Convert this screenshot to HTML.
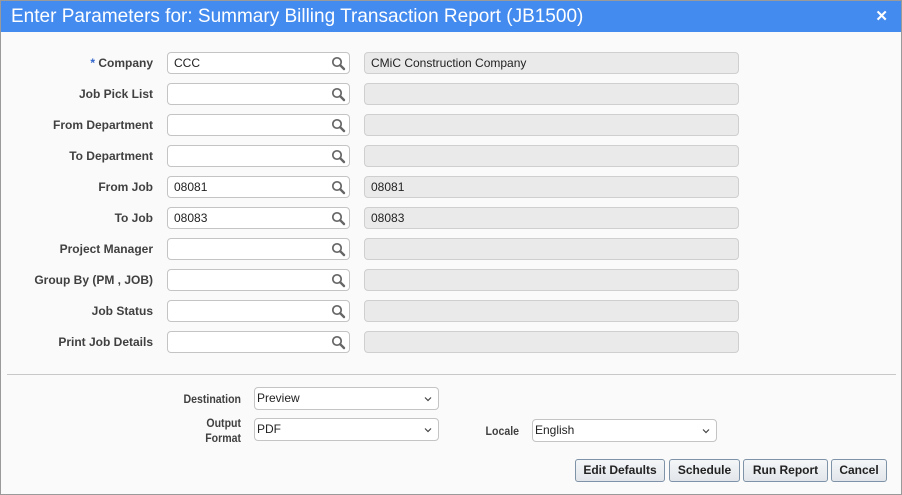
<!DOCTYPE html>
<html><head><meta charset="utf-8"><style>
*{box-sizing:border-box;margin:0;padding:0}
body{width:902px;height:495px;background:#fafafa;font-family:"Liberation Sans",Arial,sans-serif;position:relative;overflow:hidden;border:1px solid #9a9a9a}
.title{position:absolute;left:0;top:0;width:900px;height:31px;background:#448bef;color:#fff;font-size:19px;line-height:31px;padding-left:10px}
.x{position:absolute;right:13px;top:0;color:#fff;font-size:15px;font-weight:bold;line-height:31px}
.lbl{position:absolute;right:748px;font-size:12px;font-weight:bold;color:#404040;text-align:right;line-height:22px}
.inp{position:absolute;left:166px;width:183px;height:22px;background:#fff;border:1px solid #c4c4c4;border-radius:4px;font-size:12px;color:#222;line-height:20px;padding-left:6px}
.inp svg{position:absolute;right:3px;top:3px}
.dsp{position:absolute;left:363px;width:375px;height:22px;background:#eaeaea;border:1px solid #cfcfcf;border-radius:4px;font-size:12px;color:#222;line-height:20px;padding-left:6px}
.sep{position:absolute;left:6px;top:373px;width:889px;height:1px;background:#c8c8c8}
.bl{position:absolute;font-size:12px;font-weight:bold;color:#404040;text-align:right;line-height:15px;transform:scaleX(0.88);transform-origin:right center}
.sel{position:absolute;height:23px;background:#fff;border:1px solid #c4c4c4;border-radius:4px;font-size:12px;color:#222;line-height:21px;padding-left:2px}
.sel svg{position:absolute;right:6px;top:8px}
.btn{position:absolute;top:458px;height:23px;background:linear-gradient(#f4f6f8,#e2e6ea);border:1px solid #7e93a8;border-radius:3px;font-size:12px;font-weight:bold;color:#222;text-align:center;line-height:21px}
</style></head><body>
<div class="title">Enter Parameters for: Summary Billing Transaction Report (JB1500)</div>
<div class="x">✕</div>

<div class="lbl" style="top:51px"><span style="color:#3366cc">*</span> Company</div>
<div class="lbl" style="top:82px">Job Pick List</div>
<div class="lbl" style="top:113px">From Department</div>
<div class="lbl" style="top:144px">To Department</div>
<div class="lbl" style="top:175px">From Job</div>
<div class="lbl" style="top:206px">To Job</div>
<div class="lbl" style="top:237px">Project Manager</div>
<div class="lbl" style="top:268px">Group By (PM , JOB)</div>
<div class="lbl" style="top:299px">Job Status</div>
<div class="lbl" style="top:330px">Print Job Details</div>

<div class="inp" style="top:51px">CCC<svg width="15" height="15" viewBox="0 0 15 15"><circle cx="6" cy="6" r="4.2" fill="none" stroke="#666" stroke-width="1.7"/><path d="M9.2 9.2L13 13" stroke="#666" stroke-width="2.4" stroke-linecap="round"/></svg></div>
<div class="inp" style="top:82px"><svg width="15" height="15" viewBox="0 0 15 15"><circle cx="6" cy="6" r="4.2" fill="none" stroke="#666" stroke-width="1.7"/><path d="M9.2 9.2L13 13" stroke="#666" stroke-width="2.4" stroke-linecap="round"/></svg></div>
<div class="inp" style="top:113px"><svg width="15" height="15" viewBox="0 0 15 15"><circle cx="6" cy="6" r="4.2" fill="none" stroke="#666" stroke-width="1.7"/><path d="M9.2 9.2L13 13" stroke="#666" stroke-width="2.4" stroke-linecap="round"/></svg></div>
<div class="inp" style="top:144px"><svg width="15" height="15" viewBox="0 0 15 15"><circle cx="6" cy="6" r="4.2" fill="none" stroke="#666" stroke-width="1.7"/><path d="M9.2 9.2L13 13" stroke="#666" stroke-width="2.4" stroke-linecap="round"/></svg></div>
<div class="inp" style="top:175px">08081<svg width="15" height="15" viewBox="0 0 15 15"><circle cx="6" cy="6" r="4.2" fill="none" stroke="#666" stroke-width="1.7"/><path d="M9.2 9.2L13 13" stroke="#666" stroke-width="2.4" stroke-linecap="round"/></svg></div>
<div class="inp" style="top:206px">08083<svg width="15" height="15" viewBox="0 0 15 15"><circle cx="6" cy="6" r="4.2" fill="none" stroke="#666" stroke-width="1.7"/><path d="M9.2 9.2L13 13" stroke="#666" stroke-width="2.4" stroke-linecap="round"/></svg></div>
<div class="inp" style="top:237px"><svg width="15" height="15" viewBox="0 0 15 15"><circle cx="6" cy="6" r="4.2" fill="none" stroke="#666" stroke-width="1.7"/><path d="M9.2 9.2L13 13" stroke="#666" stroke-width="2.4" stroke-linecap="round"/></svg></div>
<div class="inp" style="top:268px"><svg width="15" height="15" viewBox="0 0 15 15"><circle cx="6" cy="6" r="4.2" fill="none" stroke="#666" stroke-width="1.7"/><path d="M9.2 9.2L13 13" stroke="#666" stroke-width="2.4" stroke-linecap="round"/></svg></div>
<div class="inp" style="top:299px"><svg width="15" height="15" viewBox="0 0 15 15"><circle cx="6" cy="6" r="4.2" fill="none" stroke="#666" stroke-width="1.7"/><path d="M9.2 9.2L13 13" stroke="#666" stroke-width="2.4" stroke-linecap="round"/></svg></div>
<div class="inp" style="top:330px"><svg width="15" height="15" viewBox="0 0 15 15"><circle cx="6" cy="6" r="4.2" fill="none" stroke="#666" stroke-width="1.7"/><path d="M9.2 9.2L13 13" stroke="#666" stroke-width="2.4" stroke-linecap="round"/></svg></div>

<div class="dsp" style="top:51px">CMiC Construction Company</div>
<div class="dsp" style="top:82px"></div>
<div class="dsp" style="top:113px"></div>
<div class="dsp" style="top:144px"></div>
<div class="dsp" style="top:175px">08081</div>
<div class="dsp" style="top:206px">08083</div>
<div class="dsp" style="top:237px"></div>
<div class="dsp" style="top:268px"></div>
<div class="dsp" style="top:299px"></div>
<div class="dsp" style="top:330px"></div>

<div class="sep"></div>

<div class="bl" style="left:160px;width:80px;top:391px">Destination</div>
<div class="bl" style="left:160px;width:80px;top:415px">Output<br>Format</div>
<div class="bl" style="left:470px;width:48px;top:423px">Locale</div>

<div class="sel" style="left:253px;top:386px;width:185px">Preview<svg width="8" height="6" viewBox="0 0 8 6"><path d="M1 1.5L4 4.5L7 1.5" fill="none" stroke="#444" stroke-width="1.2"/></svg></div>
<div class="sel" style="left:253px;top:417px;width:185px">PDF<svg width="8" height="6" viewBox="0 0 8 6"><path d="M1 1.5L4 4.5L7 1.5" fill="none" stroke="#444" stroke-width="1.2"/></svg></div>
<div class="sel" style="left:531px;top:418px;width:185px">English<svg width="8" height="6" viewBox="0 0 8 6"><path d="M1 1.5L4 4.5L7 1.5" fill="none" stroke="#444" stroke-width="1.2"/></svg></div>

<div class="btn" style="left:574px;width:90px">Edit Defaults</div>
<div class="btn" style="left:668px;width:71px">Schedule</div>
<div class="btn" style="left:742px;width:85px">Run Report</div>
<div class="btn" style="left:830px;width:56px">Cancel</div>
</body></html>
